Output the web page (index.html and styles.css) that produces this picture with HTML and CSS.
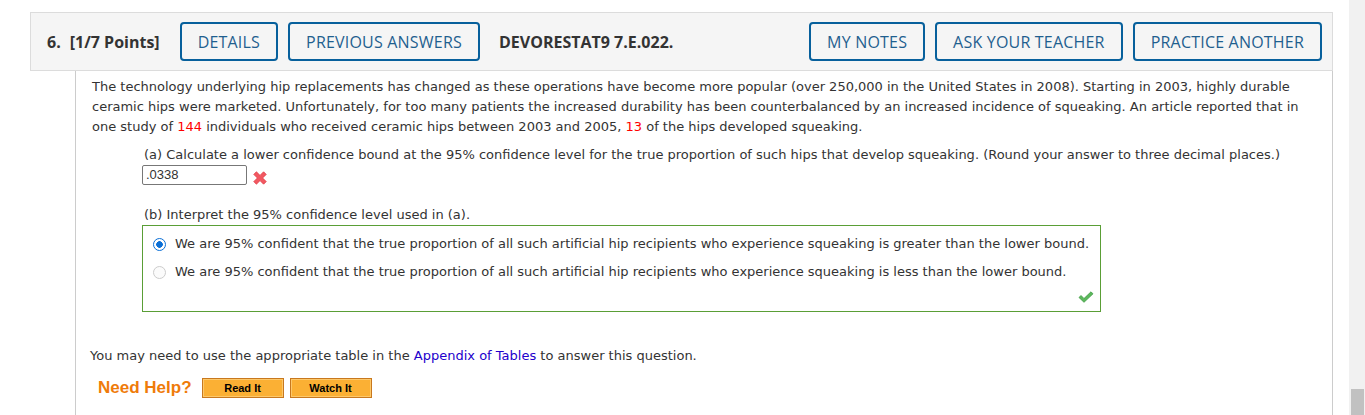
FILE: index.html
```html
<!DOCTYPE html>
<html lang="en">
<head>
    <meta charset="UTF-8">
    <meta name="viewport" content="width=device-width, initial-scale=1.0">
    <title>Question 6</title>
    <link rel="stylesheet" href="styles.css">
</head>
<body>
    <div class="page">
        <div class="qhead">
            <span class="qnum">6.</span>
            <span class="points">[1/7 Points]</span>
            <button class="hbtn">DETAILS</button>
            <button class="hbtn">PREVIOUS ANSWERS</button>
            <span class="qcode">DEVORESTAT9 7.E.022.</span>
            <span class="spacer"></span>
            <button class="hbtn">MY NOTES</button>
            <button class="hbtn">ASK YOUR TEACHER</button>
            <button class="hbtn">PRACTICE ANOTHER</button>
        </div>

        <div class="qbody">
            <p class="intro">The technology underlying hip replacements has changed as these operations have become more popular (over 250,000 in the United States in 2008). Starting in 2003, highly durable ceramic hips were marketed. Unfortunately, for too many patients the increased durability has been counterbalanced by an increased incidence of squeaking. An article reported that in one study of <span class="red">144</span> individuals who received ceramic hips between 2003 and 2005, <span class="red">13</span> of the hips developed squeaking.</p>

            <div class="part">
                <div>(a) Calculate a lower confidence bound at the 95% confidence level for the true proportion of such hips that develop squeaking. (Round your answer to three decimal places.)</div>
                <div class="answer-row">
                    <span class="answer">.0338</span>
                    <svg class="mark" width="14" height="14" viewBox="0 0 14 14">
                        <path d="M0.8 3.4 L3.4 0.8 L7 4.4 L10.6 0.8 L13.2 3.4 L9.6 7 L13.2 10.6 L10.6 13.2 L7 9.6 L3.4 13.2 L0.8 10.6 L4.4 7 Z" fill="#f25861" stroke="#e03a44" stroke-width="0.8" stroke-linejoin="round"/>
                    </svg>
                </div>
            </div>

            <div class="part part-b">
                <div>(b) Interpret the 95% confidence level used in (a).</div>
                <div class="choices">
                    <div class="choice">
                        <span class="radio checked"></span>
                        <span>We are 95% confident that the true proportion of all such artificial hip recipients who experience squeaking is greater than the lower bound.</span>
                    </div>
                    <div class="choice">
                        <span class="radio"></span>
                        <span>We are 95% confident that the true proportion of all such artificial hip recipients who experience squeaking is less than the lower bound.</span>
                    </div>
                    <div class="check-row">
                        <svg width="16" height="12" viewBox="0 0 16 12">
                            <path d="M1 6.5 L3 4.5 L6 7.5 L13 0.8 L15 2.8 L6 11.3 Z" fill="#5cb85c" stroke="#3f9a42" stroke-width="0.8" stroke-linejoin="round"/>
                        </svg>
                    </div>
                </div>
            </div>

            <p class="note">You may need to use the appropriate table in the <a href="#">Appendix of Tables</a> to answer this question.</p>

            <div class="help">
                <span class="help-title">Need Help?</span>
                <button class="help-btn">Read It</button>
                <button class="help-btn">Watch It</button>
            </div>
        </div>
    </div>

    <div class="scrollbar"><div class="thumb"></div></div>
</body>
</html>
```

FILE: styles.css
```css
html, body {
    margin: 0;
    height: 100%;
    overflow: hidden;
    background: #fff;
}
body {
    font-family: "DejaVu Sans", Verdana, sans-serif;
    font-size: 13px;
    color: #333;
}
.page {
    padding: 12px 0 0 30px;
    width: 1303px;
}
.qhead {
    display: flex;
    align-items: center;
    height: 57px;
    background: #f5f5f5;
    border: 1px solid #dcdcdc;
    padding: 0 10px 0 16px;
    font-family: "Open Sans", sans-serif;
    font-size: 16px;
}
.qnum {
    font-weight: bold;
    color: #333;
    margin-right: 9px;
}
.points {
    font-weight: bold;
    color: #333;
    margin-right: 20px;
}
.qcode {
    font-weight: bold;
    color: #333;
    margin-left: 9px;
}
.spacer {
    flex: 1;
}
.hbtn {
    font-family: "Open Sans", sans-serif;
    font-size: 16px;
    letter-spacing: 0.2px;
    color: #1f5f8f;
    background: #f5f5f5;
    border: 2px solid #07609c;
    border-radius: 4px;
    height: 39px;
    padding: 0 16px;
    margin-right: 10px;
}
.hbtn:last-child {
    margin-right: 0;
}
.qbody {
    margin-left: 45px;
    border-left: 1px solid #ccc;
    border-right: 1px solid #ccc;
    padding: 6px 16px 20px 16px;
    line-height: 20px;
}
.intro {
    margin: 0;
}
.red {
    color: #f00;
}
.part {
    margin: 8px 0 0 52px;
}
.answer-row {
    display: flex;
    align-items: center;
    margin-left: -2px;
    height: 20px;
}
.answer {
    display: inline-block;
    width: 100px;
    height: 18px;
    line-height: 18px;
    border: 1px solid #777;
    border-radius: 2px;
    padding-left: 3px;
    font-family: "Liberation Sans", Arial, sans-serif;
    font-size: 13px;
    color: #333;
    margin-top: -1px;
}
.mark {
    margin: 6px 0 0 6px;
}
.part-b {
    margin-top: 20px;
}
.choices {
    margin-left: -2px;
    border: 1px solid #5a9e36;
    height: 81px;
    width: 947px;
    padding: 4px 0 0 10px;
    position: relative;
}
.choice {
    display: flex;
    align-items: center;
    height: 28px;
}
.radio {
    width: 11px;
    height: 11px;
    border-radius: 50%;
    border: 1px solid #ccc;
    background: #fbfbfb;
    margin-right: 9px;
}
.radio.checked {
    border: 1px solid #0b6fd6;
    background: radial-gradient(circle, #0b6fd6 0, #0b6fd6 3px, #fff 3.6px);
}
.check-row {
    position: absolute;
    right: 6px;
    bottom: 8px;
    line-height: 0;
}
.note {
    margin: 34px 0 0 -2px;
}
.note a {
    color: #2200cc;
    text-decoration: none;
}
.help {
    display: flex;
    align-items: center;
    margin: 12px 0 0 6px;
}
.help-title {
    font-family: "Liberation Sans", Arial, sans-serif;
    font-weight: bold;
    font-size: 17px;
    color: #ef7b0a;
    margin-right: 10px;
}
.help-btn {
    width: 82px;
    height: 20px;
    padding: 0;
    margin-right: 6px;
    font-family: "Liberation Sans", Arial, sans-serif;
    font-weight: bold;
    font-size: 11px;
    color: #000;
    background: #fbb034;
    border: 1px solid #c8781e;
    box-shadow: inset 0 0 0 1px #fdc86a;
}
.scrollbar {
    position: fixed;
    top: 0;
    right: 0;
    width: 16px;
    height: 100%;
    background: #f1f1f1;
}
.thumb {
    position: absolute;
    top: 389px;
    left: 2px;
    width: 13px;
    height: 40px;
    background: #c1c1c1;
}
```
